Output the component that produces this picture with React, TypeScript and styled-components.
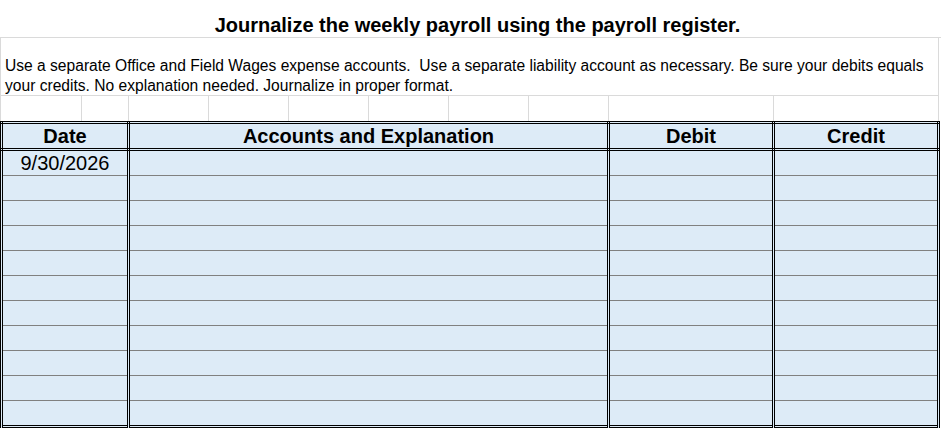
import styled, { createGlobalStyle } from "styled-components";

const GlobalStyle = createGlobalStyle`
  html, body {
    margin: 0;
    padding: 0;
    background: #ffffff;
  }
  body {
    font-family: "Liberation Sans", Arial, sans-serif;
    color: #000000;
  }
`;

const gridLine = "#dadada";
const spacerCols = [82, 47, 80, 80, 80, 80, 80, 80, 165, 165];
const rowCount = 11;

export default function App() {
  return (
    <Sheet>
      <GlobalStyle />
      <TitleRow>Journalize the weekly payroll using the payroll register.</TitleRow>
      <InstructionRow>
        <span>
          Use a separate Office and Field Wages expense accounts.{"\u00a0 "}Use a separate liability
          account as necessary. Be sure your debits equals
        </span>
        <span>your credits. No explanation needed. Journalize in proper format.</span>
      </InstructionRow>
      <SpacerRow>
        {spacerCols.map((w, i) => (
          <SpacerCell key={i} $width={w} />
        ))}
      </SpacerRow>
      <Journal>
        <colgroup>
          <col style={{ width: 127 }} />
          <col style={{ width: 480 }} />
          <col style={{ width: 165 }} />
          <col style={{ width: 165 }} />
        </colgroup>
        <thead>
          <tr>
            <HeadCell>Date</HeadCell>
            <HeadCell>Accounts and Explanation</HeadCell>
            <HeadCell>Debit</HeadCell>
            <HeadCell>Credit</HeadCell>
          </tr>
        </thead>
        <tbody>
          {Array.from({ length: rowCount }).map((_, i) => (
            <tr key={i}>
              <Cell $align="center">{i === 0 ? "9/30/2026" : ""}</Cell>
              <Cell />
              <Cell $align="right" />
              <Cell $align="right" />
            </tr>
          ))}
        </tbody>
      </Journal>
    </Sheet>
  );
}

const Sheet = styled.div`
  width: 941px;
  height: 428px;
  overflow: hidden;
  display: flex;
  flex-direction: column;
`;

const TitleRow = styled.div`
  height: 38px;
  flex-shrink: 0;
  box-sizing: border-box;
  border-bottom: 1px solid ${gridLine};
  padding: 14px 0 0 14px;
  text-align: center;
  font-size: 20px;
  font-weight: bold;
  line-height: 22px;
  white-space: nowrap;
`;

const InstructionRow = styled.div`
  width: 939px;
  height: 58px;
  flex-shrink: 0;
  box-sizing: border-box;
  border-left: 1px solid ${gridLine};
  border-right: 1px solid ${gridLine};
  border-bottom: 1px solid ${gridLine};
  padding: 18px 0 0 4px;
  display: flex;
  flex-direction: column;
  font-size: 15.6px;
  line-height: 20px;
  white-space: pre;
`;

const SpacerRow = styled.div`
  display: flex;
  height: 25px;
  flex-shrink: 0;
`;

const SpacerCell = styled.div<{ $width: number }>`
  width: ${(p) => p.$width}px;
  box-sizing: border-box;
  border-right: 1px solid ${gridLine};
  &:first-child {
    border-left: 1px solid ${gridLine};
  }
`;

const Journal = styled.table`
  width: 940px;
  table-layout: fixed;
  border-collapse: collapse;
  border: 3px double #000000;
  background: #ddebf7;
  flex-shrink: 0;
`;

const HeadCell = styled.th`
  border: 3px double #000000;
  height: 24px;
  padding: 0;
  font-size: 20px;
  font-weight: bold;
  line-height: 22px;
  text-align: center;
`;

const Cell = styled.td<{ $align?: "left" | "center" | "right" }>`
  border-left: 3px double #000000;
  border-right: 3px double #000000;
  border-bottom: 1px solid #808080;
  height: 24px;
  padding: 0 4px;
  font-size: 20px;
  line-height: 22px;
  text-align: ${(p) => p.$align ?? "left"};
`;
